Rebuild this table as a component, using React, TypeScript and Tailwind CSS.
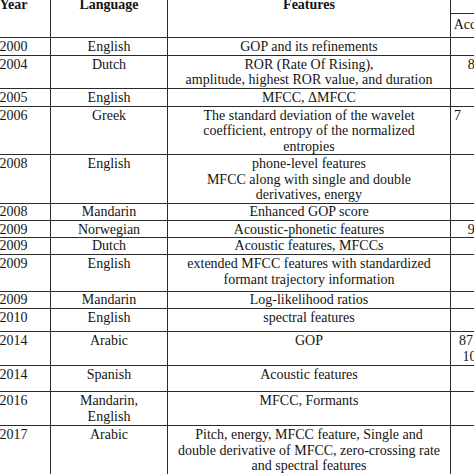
import React from "react";

type Row = {
  year: string;
  lang: React.ReactNode;
  feat: React.ReactNode;
  acc?: React.ReactNode;
  accCls?: string;
  h: string;
  tight?: boolean;
};

const rows: Row[] = [
  { year: "2000", lang: "English", feat: "GOP and its refinements", h: "h-[18px]" },
  {
    year: "2004",
    lang: "Dutch",
    feat: (
      <>
        ROR (Rate Of Rising),
        <br />
        amplitude, highest ROR value, and duration
      </>
    ),
    acc: "80%",
    h: "h-[33px]",
  },
  { year: "2005", lang: "English", feat: "MFCC, ΔMFCC", h: "h-[18px]" },
  {
    year: "2006",
    lang: "Greek",
    feat: (
      <>
        The standard deviation of the wavelet
        <br />
        coefficient, entropy of the normalized
        <br />
        entropies
      </>
    ),
    acc: "7",
    accCls: "text-left pl-[3px]",
    h: "h-[48px]",
  },
  {
    year: "2008",
    lang: "English",
    feat: (
      <>
        phone-level features
        <br />
        MFCC along with single and double
        <br />
        derivatives, energy
      </>
    ),
    h: "h-[49px]",
  },
  { year: "2008", lang: "Mandarin", feat: "Enhanced GOP score", h: "h-[16px]", tight: true },
  { year: "2009", lang: "Norwegian", feat: "Acoustic-phonetic features", acc: "95%", h: "h-[17px]" },
  { year: "2009", lang: "Dutch", feat: "Acoustic features, MFCCs", h: "h-[17px]", tight: true },
  {
    year: "2009",
    lang: "English",
    feat: (
      <>
        extended MFCC features with standardized
        <br />
        formant trajectory information
      </>
    ),
    h: "h-[37px]",
  },
  { year: "2009", lang: "Mandarin", feat: "Log-likelihood ratios", h: "h-[17px]", tight: true },
  { year: "2010", lang: "English", feat: "spectral features", h: "h-[23px]" },
  {
    year: "2014",
    lang: "Arabic",
    feat: "GOP",
    acc: (
      <>
        87.25%
        <br />
        10.2%
      </>
    ),
    h: "h-[34px]",
  },
  { year: "2014", lang: "Spanish", feat: "Acoustic features", h: "h-[26px]" },
  {
    year: "2016",
    lang: (
      <>
        Mandarin,
        <br />
        English
      </>
    ),
    feat: "MFCC, Formants",
    h: "h-[34px]",
  },
  {
    year: "2017",
    lang: "Arabic",
    feat: (
      <>
        Pitch, energy, MFCC feature, Single and
        <br />
        double derivative of MFCC, zero-crossing rate
        <br />
        and spectral features
      </>
    ),
    h: "h-[50px]",
  },
];

export default function App() {
  const td = "border border-[#2b2b2b] align-top whitespace-nowrap px-0";
  const th = "border border-t-0 border-[#2b2b2b] align-top text-center pt-px font-bold";
  return (
    <div className="w-[474px] h-[474px] overflow-hidden bg-white text-[#141414] font-['Liberation_Serif',serif] text-[14px] leading-[15.5px]">
      <table className="border-collapse table-fixed w-[654px] -ml-[24px] -mt-[4px]">
        <colgroup>
          <col className="w-[74px]" />
          <col className="w-[117px]" />
          <col className="w-[283px]" />
          <col className="w-[60px]" />
          <col className="w-[120px]" />
        </colgroup>
        <thead>
          <tr className="h-[17px]">
            <th rowSpan={2} className={th}>
              Year
            </th>
            <th rowSpan={2} className={th}>
              Language
            </th>
            <th rowSpan={2} className={th}>
              Features
            </th>
            <th colSpan={2} className={th}>
              Performance
            </th>
          </tr>
          <tr className="h-[24px]">
            <th className="border border-[#2b2b2b] align-middle text-center font-normal whitespace-nowrap">
              Accuracy
            </th>
            <th className="border border-[#2b2b2b] align-middle text-center font-normal whitespace-nowrap">
              Dataset
            </th>
          </tr>
        </thead>
        <tbody>
          {rows.map((r, i) => {
            const pad = r.tight ? "pt-0" : "pt-px";
            return (
              <tr key={i} className={r.h}>
                <td className={`${td} ${pad} text-center`}>{r.year}</td>
                <td className={`${td} ${pad} text-center`}>{r.lang}</td>
                <td className={`${td} ${pad} text-center`}>{r.feat}</td>
                <td className={`${td} ${pad} ${r.accCls ?? "text-center"}`}>{r.acc ?? ""}</td>
                <td className={`${td} ${pad} text-center`}></td>
              </tr>
            );
          })}
        </tbody>
      </table>
    </div>
  );
}
